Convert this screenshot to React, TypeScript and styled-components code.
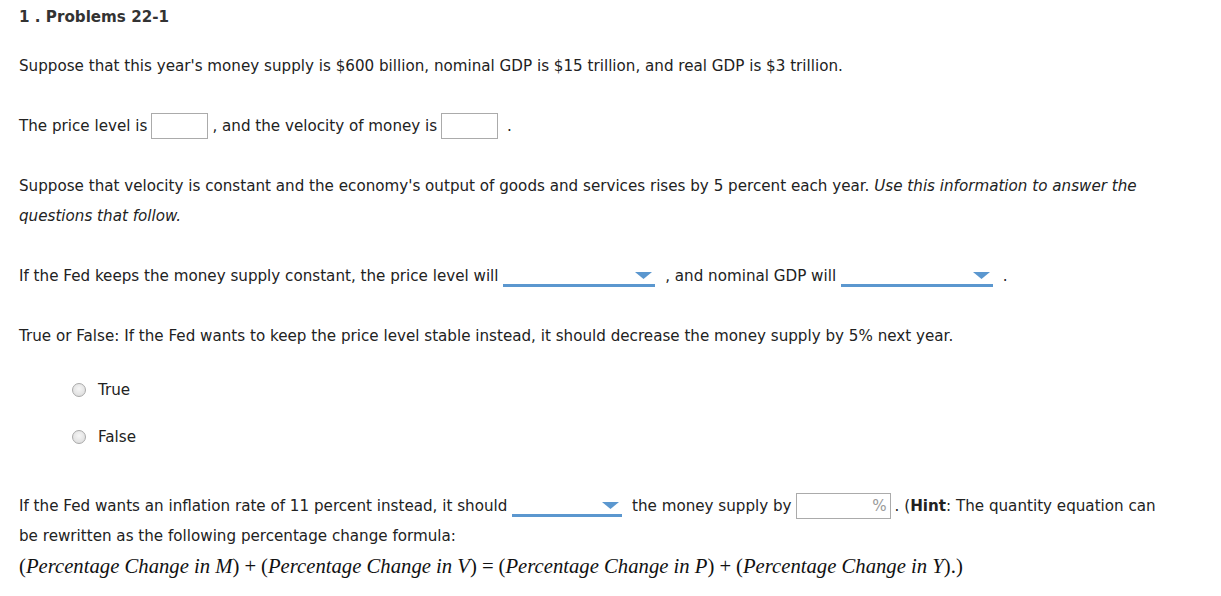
import React from 'react';
import styled, { createGlobalStyle } from 'styled-components';

const GlobalStyle = createGlobalStyle`
  html, body {
    margin: 0;
    padding: 0;
    background: #fff;
  }
  body {
    font-family: 'DejaVu Sans', Verdana, sans-serif;
    font-size: 15.15px;
    color: #222;
  }
`;

const Page = styled.div`
  padding: 7px 0 0 19px;
  width: 1150px;
`;

const Title = styled.h1`
  margin: 0;
  font-size: 15.15px;
  line-height: 20px;
  font-weight: bold;
  color: #333;
`;

const Para = styled.p<{ $top: number }>`
  margin: ${(p) => p.$top}px 0 0;
  line-height: 30px;
`;

const Blank = styled.span<{ $w: number }>`
  display: inline-block;
  overflow: hidden;
  width: ${(p) => p.$w}px;
  height: 26px;
  box-sizing: border-box;
  border: 1px solid #ababab;
  vertical-align: -8px;
  margin: 0 4px;
`;

const PctBlank = styled(Blank)`
  text-align: right;
  color: #9a9a9a;
  line-height: 24px;
  padding-right: 3px;
`;

const Select = styled.span<{ $w: number }>`
  display: inline-block;
  width: ${(p) => p.$w}px;
  height: 15px;
  box-sizing: border-box;
  border-bottom: 3px solid #5b97cf;
  vertical-align: -6px;
  margin: 0 5px 0 0;
  padding-right: 3px;
`;

const Caret = styled.svg`
  display: block;
  width: 17px;
  height: 7px;
  margin-left: auto;
`;

const RadioList = styled.div`
  margin: 25px 0 0 52px;
  display: flex;
  flex-direction: column;
  gap: 19px;
`;

const RadioRow = styled.label`
  display: flex;
  align-items: center;
  gap: 12px;
  height: 28px;
`;

const RadioDot = styled.span`
  width: 14px;
  height: 14px;
  border-radius: 50%;
  box-sizing: border-box;
  border: 1px solid #aaa;
  background: radial-gradient(circle at 50% 40%, #f6f6f6 0%, #d8d8d8 100%);
  margin-left: 1px;
`;

const Formula = styled.div`
  font-family: 'Liberation Serif', 'Times New Roman', serif;
  font-size: 20.7px;
  line-height: 30px;
  color: #111;
  white-space: nowrap;
`;

const MathVar = styled.i`
  font-style: italic;
`;

const Op = styled.span`
  margin: 0 5px;
`;

function Dropdown({ w }: { w: number }) {
  return (
    <Select $w={w}>
      <Caret viewBox="0 0 17 7">
        <path d="M0 0 H17 L8.5 7 Z" fill="#5b97cf" />
      </Caret>
    </Select>
  );
}

function Term({ v }: { v: string }) {
  return (
    <>
      (<MathVar>Percentage Change in {v}</MathVar>)
    </>
  );
}

export default function App() {
  return (
    <>
      <GlobalStyle />
      <Page>
        <Title>1 . Problems 22-1</Title>
        <Para $top={24}>
          Suppose that this year's money supply is $600 billion, nominal GDP is $15 trillion, and real GDP is $3 trillion.
        </Para>
        <Para $top={30}>
          The price level is<Blank $w={57} />, and the velocity of money is<Blank $w={57} /> .
        </Para>
        <Para $top={30}>
          Suppose that velocity is constant and the economy's output of goods and services rises by 5 percent each year.{' '}
          <i>Use this information to answer the questions that follow.</i>
        </Para>
        <Para $top={30}>
          If the Fed keeps the money supply constant, the price level will <Dropdown w={152} /> , and nominal GDP will{' '}
          <Dropdown w={152} /> .
        </Para>
        <Para $top={30}>
          True or False: If the Fed wants to keep the price level stable instead, it should decrease the money supply by 5% next year.
        </Para>
        <RadioList>
          <RadioRow>
            <RadioDot />
            True
          </RadioRow>
          <RadioRow>
            <RadioDot />
            False
          </RadioRow>
        </RadioList>
        <Para $top={40}>
          If the Fed wants an inflation rate of 11 percent instead, it should <Dropdown w={110} /> the money supply by
          <PctBlank $w={95}>%</PctBlank>. (<b>Hint</b>: The quantity equation can be rewritten as the following percentage
          change formula:
        </Para>
        <Formula>
          <Term v="M" />
          <Op>+</Op>
          <Term v="V" />
          <Op>=</Op>
          <Term v="P" />
          <Op>+</Op>
          <Term v="Y" />
          .)
        </Formula>
      </Page>
    </>
  );
}
